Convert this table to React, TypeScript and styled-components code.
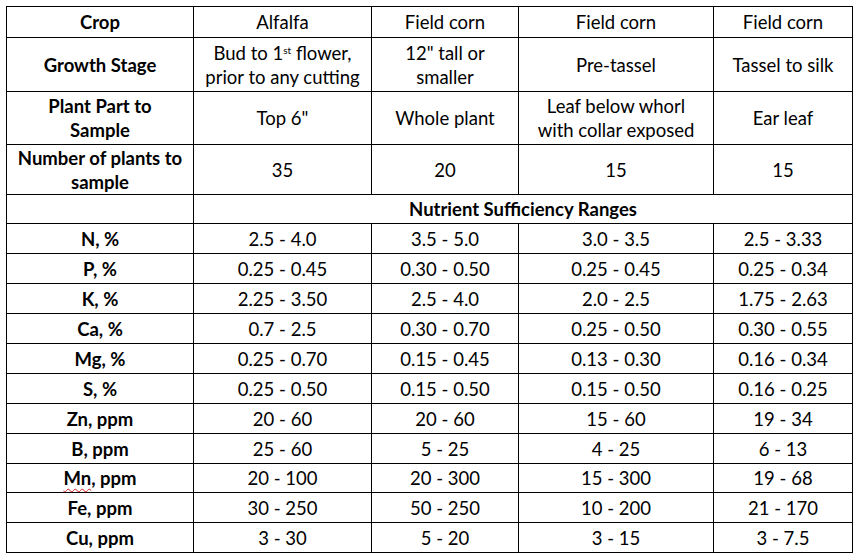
import React from "react";
import styled, { createGlobalStyle } from "styled-components";

const Global = createGlobalStyle`
  html, body { margin: 0; padding: 0; background: #ffffff; }
  body { font-family: Lato, "Open Sans", sans-serif; color: #000; }
`;

const Page = styled.div`
  padding: 6px 0 0 6px;
`;

const Table = styled.table`
  border-collapse: collapse;
  table-layout: fixed;
  width: 846px;
  font-family: Lato, "Open Sans", sans-serif;
  font-size: 18.5px;
  line-height: 24px;
  color: #000;
`;

const Row = styled.tr<{ $h: number }>`
  height: ${(p) => p.$h}px;
`;

const Cell = styled.td<{ $bold?: boolean }>`
  border: 1px solid #000;
  padding: 0 2px;
  text-align: center;
  vertical-align: middle;
  white-space: nowrap;
  font-weight: ${(p) => (p.$bold ? 700 : 400)};
  box-sizing: border-box;
`;

const Sup = styled.sup`
  font-size: 10px;
  line-height: 0;
  vertical-align: 6px;
`;

const Squiggle = styled.span`
  text-decoration: underline wavy #d21c1c;
  text-decoration-thickness: 1px;
  text-underline-offset: 3px;
`;

const widths = [187, 178, 147, 195, 139];

type Data = { label: React.ReactNode; values: string[] };

const nutrients: Data[] = [
  { label: "N, %", values: ["2.5 - 4.0", "3.5 - 5.0", "3.0 - 3.5", "2.5 - 3.33"] },
  { label: "P, %", values: ["0.25 - 0.45", "0.30 - 0.50", "0.25 - 0.45", "0.25 - 0.34"] },
  { label: "K, %", values: ["2.25 - 3.50", "2.5 - 4.0", "2.0 - 2.5", "1.75 - 2.63"] },
  { label: "Ca, %", values: ["0.7 - 2.5", "0.30 - 0.70", "0.25 - 0.50", "0.30 - 0.55"] },
  { label: "Mg, %", values: ["0.25 - 0.70", "0.15 - 0.45", "0.13 - 0.30", "0.16 - 0.34"] },
  { label: "S, %", values: ["0.25 - 0.50", "0.15 - 0.50", "0.15 - 0.50", "0.16 - 0.25"] },
  { label: "Zn, ppm", values: ["20 - 60", "20 - 60", "15 - 60", "19 - 34"] },
  { label: "B, ppm", values: ["25 - 60", "5 - 25", "4 - 25", "6 - 13"] },
  { label: <><Squiggle>Mn</Squiggle>, ppm</>, values: ["20 - 100", "20 - 300", "15 - 300", "19 - 68"] },
  { label: "Fe, ppm", values: ["30 - 250", "50 - 250", "10 - 200", "21 - 170"] },
  { label: "Cu, ppm", values: ["3 - 30", "5 - 20", "3 - 15", "3 - 7.5"] },
];

const nutrientHeights = [30, 30, 30, 30, 30, 30, 30, 30, 29, 30, 30];

export default function App() {
  return (
    <>
      <Global />
      <Page>
        <Table>
          <colgroup>
            {widths.map((w, i) => (
              <col key={i} style={{ width: w }} />
            ))}
          </colgroup>
          <tbody>
            <Row $h={31}>
              <Cell $bold>Crop</Cell>
              <Cell>Alfalfa</Cell>
              <Cell>Field corn</Cell>
              <Cell>Field corn</Cell>
              <Cell>Field corn</Cell>
            </Row>
            <Row $h={54}>
              <Cell $bold>Growth Stage</Cell>
              <Cell>
                Bud to 1<Sup>st</Sup> flower,
                <br />
                prior to any cutting
              </Cell>
              <Cell>
                12" tall or
                <br />
                smaller
              </Cell>
              <Cell>Pre-tassel</Cell>
              <Cell>Tassel to silk</Cell>
            </Row>
            <Row $h={53}>
              <Cell $bold>
                Plant Part to
                <br />
                Sample
              </Cell>
              <Cell>Top 6"</Cell>
              <Cell>Whole plant</Cell>
              <Cell>
                Leaf below whorl
                <br />
                with collar exposed
              </Cell>
              <Cell>Ear leaf</Cell>
            </Row>
            <Row $h={50}>
              <Cell $bold>
                Number of plants to
                <br />
                sample
              </Cell>
              <Cell>35</Cell>
              <Cell>20</Cell>
              <Cell>15</Cell>
              <Cell>15</Cell>
            </Row>
            <Row $h={29}>
              <Cell />
              <Cell $bold colSpan={4}>
                Nutrient Sufficiency Ranges
              </Cell>
            </Row>
            {nutrients.map((n, i) => (
              <Row key={i} $h={nutrientHeights[i]}>
                <Cell $bold>{n.label}</Cell>
                {n.values.map((v, j) => (
                  <Cell key={j}>{v}</Cell>
                ))}
              </Row>
            ))}
          </tbody>
        </Table>
      </Page>
    </>
  );
}
